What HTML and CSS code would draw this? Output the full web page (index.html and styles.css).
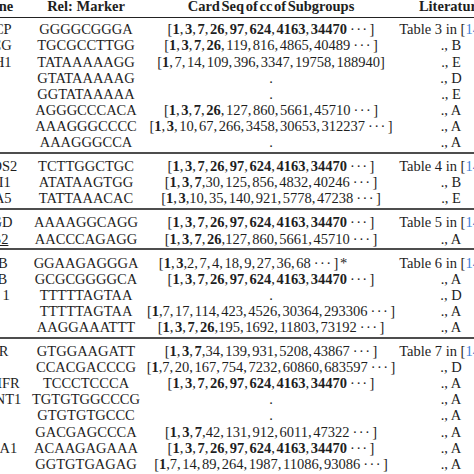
FILE: index.html
```html
<!DOCTYPE html>
<html>
<head>
<meta charset="utf-8">
<title>Table</title>
<link rel="stylesheet" href="styles.css">
</head>
<body>
<div class="sheet">
  <div class="row head">
    <div class="gene">Gene</div><div class="mk">Rel: Marker</div><div class="seq">Card Seq of cc of Subgroups</div><div class="lit">Literature</div>
  </div>

  <div class="group g-first">
    <div class="row"><div class="gene">MCP</div><div class="mk">GGGGCGGGA</div><div class="seq">[<b>1</b>, <b>3</b>, <b>7</b>, <b>26</b>, <b>97</b>, <b>624</b>, <b>4163</b>, <b>34470</b><span class="dots">···</span>]</div><div class="lit">Table 3 in [<span class="cite">14,15</span>]</div></div>
    <div class="row"><div class="gene">HCG</div><div class="mk">TGCGCCTTGG</div><div class="seq">[<b>1</b>, <b>3</b>, <b>7</b>, <b>26</b>, 119, 816, 4865, 40489<span class="dots">···</span>]</div><div class="lit">., B</div></div>
    <div class="row"><div class="gene">MH1</div><div class="mk">TATAAAAAGG</div><div class="seq">[<b>1</b>, 7, 14, 109, 396, 3347, 19758, 188940]</div><div class="lit">., E</div></div>
    <div class="row"><div class="gene"></div><div class="mk">GTATAAAAAG</div><div class="seq">.</div><div class="lit">., D</div></div>
    <div class="row"><div class="gene"></div><div class="mk">GGTATAAAAA</div><div class="seq">.</div><div class="lit">., E</div></div>
    <div class="row"><div class="gene"></div><div class="mk">AGGGCCCACA</div><div class="seq">[<b>1</b>, <b>3</b>, <b>7</b>, <b>26</b>, 127, 860, 5661, 45710<span class="dots">···</span>]</div><div class="lit">., A</div></div>
    <div class="row"><div class="gene"></div><div class="mk">AAAGGGCCCC</div><div class="seq">[<b>1</b>, <b>3</b>, 10, 67, 266, 3458, 30653, 312237<span class="dots">···</span>]</div><div class="lit">., A</div></div>
    <div class="row"><div class="gene"></div><div class="mk">AAAGGGCCA</div><div class="seq">.</div><div class="lit">., A</div></div>
  </div>

  <div class="group">
    <div class="row"><div class="gene">NOS2</div><div class="mk">TCTTGGCTGC</div><div class="seq">[<b>1</b>, <b>3</b>, <b>7</b>, <b>26</b>, <b>97</b>, <b>624</b>, <b>4163</b>, <b>34470</b><span class="dots">···</span>]</div><div class="lit">Table 4 in [<span class="cite">14,15</span>]</div></div>
    <div class="row"><div class="gene">TTI1</div><div class="mk">ATATAAGTGG</div><div class="seq">[<b>1</b>, <b>3</b>, <b>7</b>,30, 125, 856, 4832, 40246<span class="dots">···</span>]</div><div class="lit">., B</div></div>
    <div class="row"><div class="gene">MA5</div><div class="mk">TATTAAACAC</div><div class="seq">[<b>1</b>, <b>3</b>,10, 35, 140, 921, 5778, 47238<span class="dots">···</span>]</div><div class="lit">., E</div></div>
  </div>

  <div class="group">
    <div class="row"><div class="gene">HGD</div><div class="mk">AAAAGGCAGG</div><div class="seq">[<b>1</b>, <b>3</b>, <b>7</b>, <b>26</b>, <b>97</b>, <b>624</b>, <b>4163</b>, <b>34470</b><span class="dots">···</span>]</div><div class="lit">Table 5 in [<span class="cite">14,15</span>]</div></div>
    <div class="row"><div class="gene ul">HB2</div><div class="mk">AACCCAGAGG</div><div class="seq">[<b>1</b>, <b>3</b>, <b>7</b>, <b>26</b>,127, 860, 5661, 45710<span class="dots">···</span>]</div><div class="lit">., A</div></div>
  </div>

  <div class="group">
    <div class="row"><div class="gene">PTB</div><div class="mk">GGAAGAGGGA</div><div class="seq"><span class="shift">[<b>1</b>, <b>3</b>,2, 7, 4, 18, 9, 27, 36, 68<span class="dots">···</span>] *</span></div><div class="lit">Table 6 in [<span class="cite">14,15</span>]</div></div>
    <div class="row"><div class="gene">LTB</div><div class="mk">GCGCGGGGCA</div><div class="seq">[<b>1</b>, <b>3</b>, <b>7</b>, <b>26</b>, <b>97</b>, <b>624</b>, <b>4163</b>, <b>34470</b><span class="dots">···</span>]</div><div class="lit">., A</div></div>
    <div class="row"><div class="gene">AP 1</div><div class="mk">TTTTTAGTAA</div><div class="seq">.</div><div class="lit">., D</div></div>
    <div class="row"><div class="gene"></div><div class="mk">TTTTTAGTAA</div><div class="seq">[<b>1</b>,7, 17, 114, 423, 4526, 30364, 293306<span class="dots">···</span>]</div><div class="lit">., A</div></div>
    <div class="row"><div class="gene"></div><div class="mk">AAGGAAATTT</div><div class="seq">[<b>1</b>, <b>3</b>, <b>7</b>, <b>26</b>,195, 1692, 11803, 73192<span class="dots">···</span>]</div><div class="lit">., A</div></div>
  </div>

  <div class="group g-last">
    <div class="row"><div class="gene">TTR</div><div class="mk">GTGGAAGATT</div><div class="seq">[<b>1</b>, <b>3</b>, <b>7</b>,34, 139, 931, 5208, 43867<span class="dots">···</span>]</div><div class="lit">Table 7 in [<span class="cite">14,15</span>]</div></div>
    <div class="row"><div class="gene"></div><div class="mk">CCACGACCCG</div><div class="seq">[<b>1</b>,7, 20, 167, 754, 7232, 60860, 683597<span class="dots">···</span>]</div><div class="lit">., D</div></div>
    <div class="row"><div class="gene">DHFR</div><div class="mk">TCCCTCCCA</div><div class="seq">[<b>1</b>, <b>3</b>, <b>7</b>, <b>26</b>, <b>97</b>, <b>624</b>, <b>4163</b>, <b>34470</b><span class="dots">···</span>]</div><div class="lit">., A</div></div>
    <div class="row"><div class="gene">WNT1</div><div class="mk">TGTGTGGCCCG</div><div class="seq">.</div><div class="lit">., A</div></div>
    <div class="row"><div class="gene"></div><div class="mk">GTGTGTGCCC</div><div class="seq">.</div><div class="lit">., A</div></div>
    <div class="row"><div class="gene"></div><div class="mk">GACGAGCCCA</div><div class="seq">[<b>1</b>, <b>3</b>, <b>7</b>,42, 131, 912, 6011, 47322<span class="dots">···</span>]</div><div class="lit">., A</div></div>
    <div class="row"><div class="gene">SGA1</div><div class="mk">ACAAGAGAAA</div><div class="seq">[<b>1</b>, <b>3</b>, <b>7</b>, <b>26</b>, <b>97</b>, <b>624</b>, <b>4163</b>, <b>34470</b><span class="dots">···</span>]</div><div class="lit">., A</div></div>
    <div class="row"><div class="gene"></div><div class="mk">GGTGTGAGAG</div><div class="seq">[<b>1</b>,7, 14, 89, 264, 1987, 11086, 93086<span class="dots">···</span>]</div><div class="lit">., A</div></div>
  </div>
</div>
</body>
</html>
```

FILE: styles.css
```css
html, body {
  margin: 0;
  padding: 0;
  background: #ffffff;
}

body {
  width: 474px;
  height: 474px;
  overflow: hidden;
  font-family: "Liberation Serif", "Times New Roman", serif;
  font-size: 14.5px;
  color: #1e1e1e;
}

.sheet {
  width: 525px;
  margin-left: -19px;
  margin-top: -2.5px;
}

.row {
  display: grid;
  grid-template-columns: 45px 120px 250px 110px;
  height: 16.1px;
  line-height: 16.1px;
  white-space: nowrap;
}

.row > div {
  text-align: center;
}

.row > .gene {
  text-align: left;
}

.head {
  font-weight: bold;
  padding-bottom: 3px;
  border-bottom: 1px solid #222222;
}

.group {
  padding: 4.5px 0 1.5px;
  border-bottom: 2px solid #4d4d4d;
}

.g-first {
  padding-top: 3.8px;
}

.g-last {
  border-bottom: none;
}

.seq {
  word-spacing: -2px;
}

.seq b {
  font-weight: bold;
}

.dots {
  letter-spacing: 1.4px;
  margin: 0 1px 0 3px;
}

.shift {
  margin-right: 36px;
}

.cite {
  color: #3d7fd6;
}

.ul {
  text-decoration: underline;
}
```
